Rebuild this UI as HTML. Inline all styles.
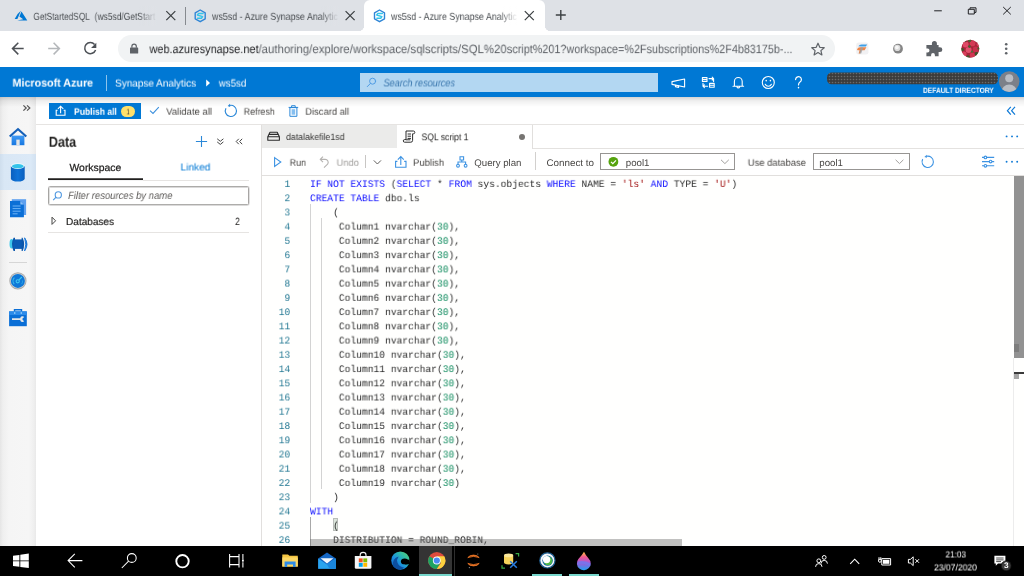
<!DOCTYPE html>
<html>
<head>
<meta charset="utf-8">
<title>ws5sd - Azure Synapse Analytics</title>
<style>
*{box-sizing:border-box;margin:0;padding:0}
html,body{width:1024px;height:576px;overflow:hidden;background:#fff}
body{font-family:"Liberation Sans",sans-serif;position:relative;color:#323130;text-rendering:geometricPrecision}
.a{position:absolute}
.t{position:absolute;white-space:nowrap;line-height:1;transform-origin:0 50%;will-change:transform}
svg{position:absolute;overflow:visible}
.dd{position:absolute;border:1px solid #979593;background:#fff}
#code{left:262px;top:176px;width:752px;height:370px;overflow:hidden;font-family:"Liberation Mono",monospace;font-size:10px;color:#2a2a2a}
.ln{position:absolute;left:0;width:28.2px;text-align:right;color:#237893;line-height:14.24px;height:14.24px;white-space:pre;transform-origin:100% 50%;will-change:transform}
.cl{position:absolute;left:48px;line-height:14.24px;height:14.24px;white-space:pre;transform-origin:0 50%;will-change:transform}
.k{color:#0c0cff}.n{color:#09885a}.s{color:#a31515}
.bm{background:#dfe6df;outline:1px solid #b9b9b9}
</style>
</head>

<body>
<!-- ===== Chrome tab bar ===== -->
<div class="a" style="left:0;top:0;width:1024px;height:30.5px;background:#dee1e6"></div>
<div class="a" style="left:363.8px;top:0;width:180.8px;height:31px;background:#fff;border-radius:6px 6px 0 0"></div>
<div class="a" style="left:358.8px;top:25.5px;width:5px;height:5px;background:radial-gradient(circle at 0 0,#dee1e6 4.8px,#fff 5.2px)"></div>
<div class="a" style="left:544.6px;top:25.5px;width:5px;height:5px;background:radial-gradient(circle at 100% 0,#dee1e6 4.8px,#fff 5.2px)"></div>
<div class="a" style="left:185px;top:7px;width:1px;height:17.5px;background:#868a8f"></div>
<!-- ===== nav bar ===== -->
<div class="a" style="left:0;top:30.5px;width:1024px;height:37.5px;background:#fff"></div>
<div class="a" style="left:118px;top:35px;width:717px;height:26.5px;border-radius:13.25px;background:#f1f3f4"></div>
<!-- ===== Azure bar ===== -->
<div class="a" style="left:0;top:67.3px;width:1024px;height:29.6px;background:#0078d4;will-change:transform"></div>
<div class="a" style="left:106px;top:74.5px;width:1px;height:16px;background:#8cc3ec"></div>
<div class="a" style="left:360px;top:73px;width:298px;height:19px;background:#b3d7f2"></div>
<!-- ===== app ===== -->
<div class="a" style="left:0;top:97px;width:35.8px;height:449px;background:linear-gradient(90deg,#e5e5e5 0,#efefef 8%,#f5f5f5 25%,#f6f6f6 80%,#efefef 94%,#e9e9e9 100%)"></div>
<div class="a" style="left:0;top:154.3px;width:35.8px;height:35.8px;background:linear-gradient(90deg,#cfdeed 0,#d9e7f5 12%,#dbe9f7 85%,#d2e1f0 100%);will-change:transform"></div>
<div class="a" style="left:9px;top:262px;width:18px;height:1px;background:#d6d6d6"></div>
<div class="a" style="left:36px;top:97px;width:988px;height:27.5px;background:#fff;border-bottom:1px solid #e6e4e2"></div>
<div class="a" style="left:0;top:96.9px;width:1024px;height:10px;background:linear-gradient(rgba(0,0,0,.17),rgba(0,0,0,.06) 40%,rgba(0,0,0,0))"></div>
<div class="a" style="left:48.75px;top:103px;width:92px;height:16px;background:#0078d4"></div>
<div class="a" style="left:121px;top:106px;width:14px;height:10.9px;border-radius:5.45px;background:#ffe16b"></div>
<!-- data panel -->
<div class="a" style="left:48px;top:178px;width:94.5px;height:2px;background:#201f1e;will-change:transform;transform:translateY(.15px) scaleY(.9)"></div>
<div class="a" style="left:142.5px;top:179.5px;width:106.5px;height:1px;background:#e6e4e2"></div>
<div class="a" style="left:48px;top:186px;width:201px;height:19px;border:1px solid #8a8886;border-radius:1.5px;background:#fff;will-change:transform;transform:translate(.25px,.3px)"></div>
<div class="a" style="left:48px;top:232px;width:201px;height:1px;background:#e6e4e2"></div>
<!-- editor -->
<div class="a" style="left:261px;top:124.5px;width:763px;height:421.5px;background:#fffffe;border-left:1px solid #e1dfdd"></div>
<div class="a" style="left:262px;top:124.5px;width:762px;height:24px;background:#fff"></div>
<div class="a" style="left:532px;top:147.6px;width:492px;height:1px;background:#e4e2e0"></div>
<div class="a" style="left:262px;top:124.5px;width:135.25px;height:23.3px;background:#ebebea"></div>
<div class="a" style="left:397.25px;top:124.5px;width:135.5px;height:24px;background:#fff;border-right:1px solid #e1dfdd"></div>
<div class="a" style="left:518.5px;top:133.75px;width:6px;height:6px;border-radius:3px;background:#767472"></div>
<div class="a" style="left:262px;top:148.5px;width:762px;height:27px;background:#fff;border-bottom:1px solid #e1dfdd"></div>
<div class="a" style="left:365px;top:155px;width:1px;height:13px;background:#c8c6c4"></div>
<div class="a" style="left:534.5px;top:152px;width:1px;height:18px;background:#d2d0ce"></div>
<div class="dd" style="left:600.25px;top:153.25px;width:135px;height:16.5px"></div>
<div class="dd" style="left:812.5px;top:153.25px;width:97.5px;height:16.5px"></div>
<!-- scrollbars --><!-- track line -->
<div class="a" style="left:1013.3px;top:358px;width:1px;height:188px;background:#ececec"></div>
<div class="a" style="left:1014px;top:176px;width:10px;height:182px;background:#929292"></div>
<div class="a" style="left:1014px;top:344px;width:5px;height:8px;background:#7d7d7d"></div>
<div class="a" style="left:1014px;top:372px;width:10px;height:1.5px;background:#3a3a3a"></div>
<div class="a" style="left:1014px;top:373.5px;width:5px;height:5.5px;background:#a5a5a5"></div>

<div class="a" id="code">
<div class="a" style="left:70.8px;top:341.76px;width:5.6px;height:13.6px;background:#dbe5db;border:1px solid #b9bdb9"></div>
<div class="a" style="left:47.5px;top:28.08px;width:1px;height:299.04px;background:#d3d3d3"></div>
<div class="a" style="left:59.2px;top:42.32px;width:1px;height:270.56px;background:#d3d3d3"></div>
<div class="a" style="left:47.5px;top:341.36px;width:1.2px;height:42.72px;background:#a8a8a8"></div>
<div class="ln" style="top:2px;transform:translateY(0.9px) scaleX(.9617)">1</div><div class="cl" style="top:2px;transform:translateY(0.9px) scaleX(.9617)"><span class=k>IF</span> <span class=k>NOT</span> <span class=k>EXISTS</span> (<span class=k>SELECT</span> * <span class=k>FROM</span> sys.objects <span class=k>WHERE</span> NAME = <span class=s>'ls'</span> <span class=k>AND</span> TYPE = <span class=s>'U'</span>)</div>
<div class="ln" style="top:17px;transform:translateY(0.14px) scaleX(.9617)">2</div><div class="cl" style="top:17px;transform:translateY(0.14px) scaleX(.9617)"><span class=k>CREATE</span> <span class=k>TABLE</span> dbo.ls</div>
<div class="ln" style="top:31px;transform:translateY(0.38px) scaleX(.9617)">3</div><div class="cl" style="top:31px;transform:translateY(0.38px) scaleX(.9617)">    (</div>
<div class="ln" style="top:45px;transform:translateY(0.62px) scaleX(.9617)">4</div><div class="cl" style="top:45px;transform:translateY(0.62px) scaleX(.9617)">     Column1 nvarchar(<span class=n>30</span>),</div>
<div class="ln" style="top:59px;transform:translateY(0.86px) scaleX(.9617)">5</div><div class="cl" style="top:59px;transform:translateY(0.86px) scaleX(.9617)">     Column2 nvarchar(<span class=n>30</span>),</div>
<div class="ln" style="top:74px;transform:translateY(0.1px) scaleX(.9617)">6</div><div class="cl" style="top:74px;transform:translateY(0.1px) scaleX(.9617)">     Column3 nvarchar(<span class=n>30</span>),</div>
<div class="ln" style="top:88px;transform:translateY(0.34px) scaleX(.9617)">7</div><div class="cl" style="top:88px;transform:translateY(0.34px) scaleX(.9617)">     Column4 nvarchar(<span class=n>30</span>),</div>
<div class="ln" style="top:102px;transform:translateY(0.58px) scaleX(.9617)">8</div><div class="cl" style="top:102px;transform:translateY(0.58px) scaleX(.9617)">     Column5 nvarchar(<span class=n>30</span>),</div>
<div class="ln" style="top:116px;transform:translateY(0.82px) scaleX(.9617)">9</div><div class="cl" style="top:116px;transform:translateY(0.82px) scaleX(.9617)">     Column6 nvarchar(<span class=n>30</span>),</div>
<div class="ln" style="top:131px;transform:translateY(0.06px) scaleX(.9617)">10</div><div class="cl" style="top:131px;transform:translateY(0.06px) scaleX(.9617)">     Column7 nvarchar(<span class=n>30</span>),</div>
<div class="ln" style="top:145px;transform:translateY(0.3px) scaleX(.9617)">11</div><div class="cl" style="top:145px;transform:translateY(0.3px) scaleX(.9617)">     Column8 nvarchar(<span class=n>30</span>),</div>
<div class="ln" style="top:159px;transform:translateY(0.54px) scaleX(.9617)">12</div><div class="cl" style="top:159px;transform:translateY(0.54px) scaleX(.9617)">     Column9 nvarchar(<span class=n>30</span>),</div>
<div class="ln" style="top:173px;transform:translateY(0.78px) scaleX(.9617)">13</div><div class="cl" style="top:173px;transform:translateY(0.78px) scaleX(.9617)">     Column10 nvarchar(<span class=n>30</span>),</div>
<div class="ln" style="top:188px;transform:translateY(0.02px) scaleX(.9617)">14</div><div class="cl" style="top:188px;transform:translateY(0.02px) scaleX(.9617)">     Column11 nvarchar(<span class=n>30</span>),</div>
<div class="ln" style="top:202px;transform:translateY(0.26px) scaleX(.9617)">15</div><div class="cl" style="top:202px;transform:translateY(0.26px) scaleX(.9617)">     Column12 nvarchar(<span class=n>30</span>),</div>
<div class="ln" style="top:216px;transform:translateY(0.5px) scaleX(.9617)">16</div><div class="cl" style="top:216px;transform:translateY(0.5px) scaleX(.9617)">     Column13 nvarchar(<span class=n>30</span>),</div>
<div class="ln" style="top:230px;transform:translateY(0.74px) scaleX(.9617)">17</div><div class="cl" style="top:230px;transform:translateY(0.74px) scaleX(.9617)">     Column14 nvarchar(<span class=n>30</span>),</div>
<div class="ln" style="top:244px;transform:translateY(0.98px) scaleX(.9617)">18</div><div class="cl" style="top:244px;transform:translateY(0.98px) scaleX(.9617)">     Column15 nvarchar(<span class=n>30</span>),</div>
<div class="ln" style="top:259px;transform:translateY(0.22px) scaleX(.9617)">19</div><div class="cl" style="top:259px;transform:translateY(0.22px) scaleX(.9617)">     Column16 nvarchar(<span class=n>30</span>),</div>
<div class="ln" style="top:273px;transform:translateY(0.46px) scaleX(.9617)">20</div><div class="cl" style="top:273px;transform:translateY(0.46px) scaleX(.9617)">     Column17 nvarchar(<span class=n>30</span>),</div>
<div class="ln" style="top:287px;transform:translateY(0.7px) scaleX(.9617)">21</div><div class="cl" style="top:287px;transform:translateY(0.7px) scaleX(.9617)">     Column18 nvarchar(<span class=n>30</span>),</div>
<div class="ln" style="top:301px;transform:translateY(0.94px) scaleX(.9617)">22</div><div class="cl" style="top:301px;transform:translateY(0.94px) scaleX(.9617)">     Column19 nvarchar(<span class=n>30</span>)</div>
<div class="ln" style="top:316px;transform:translateY(0.18px) scaleX(.9617)">23</div><div class="cl" style="top:316px;transform:translateY(0.18px) scaleX(.9617)">    )</div>
<div class="ln" style="top:330px;transform:translateY(0.42px) scaleX(.9617)">24</div><div class="cl" style="top:330px;transform:translateY(0.42px) scaleX(.9617)"><span class=k>WITH</span></div>
<div class="ln" style="top:344px;transform:translateY(0.66px) scaleX(.9617)">25</div><div class="cl" style="top:344px;transform:translateY(0.66px) scaleX(.9617)">    (</div>
<div class="ln" style="top:358px;transform:translateY(0.9px) scaleX(.9617)">26</div><div class="cl" style="top:358px;transform:translateY(0.9px) scaleX(.9617)">    DISTRIBUTION = ROUND_ROBIN,</div>
</div>
<div class="a" style="left:310px;top:538.5px;width:371.5px;height:7.5px;background:rgba(100,100,100,.4)"></div>
<!-- taskbar -->
<div class="a" style="left:0;top:546px;width:1024px;height:30px;background:#000"></div>
<div class="a" style="left:418.8px;top:546px;width:33px;height:30px;background:#343434"></div>
<div class="a" style="left:454px;top:546px;width:1px;height:30px;background:#2e2e2e"></div>
<div class="a" style="left:418.8px;top:574.4px;width:33px;height:1.6px;background:#76d6cb"></div>
<div class="a" style="left:532.2px;top:574.4px;width:30px;height:1.6px;background:#76d6cb"></div>
<div class="a" style="left:568.8px;top:574.4px;width:30.2px;height:1.6px;background:#76d6cb"></div>
<svg width="1024" height="576" viewBox="0 0 1024 576" style="left:0;top:0" fill="none">
<!-- windows logo -->
<path d="M13 555.8 L19.4 554.9 V560.4 H13Z M20.3 554.8 L28.8 553.6 V560.4 H20.3Z M13 561.3 H19.4 V566.8 L13 565.9Z M20.3 561.3 H28.8 V568.1 L20.3 566.9Z" fill="#fff"/>
<g stroke="#fff" stroke-width="1.05">
<!-- back -->
<path d="M82.4 560.6 H68.2 M74.8 553.9 L68.1 560.6 L74.8 567.3"/>
<!-- search -->
<circle cx="131.8" cy="558" r="4.4"/><path d="M128.6 561.2 L121.8 568"/>
<!-- cortana -->
<circle cx="182.5" cy="561.2" r="6.2" stroke-width="1.9"/>
<!-- task view -->
<path d="M229.6 556.6 H239 V564.6 H229.6Z M229.6 553.9 V556 M239 553.9 V556 M229.6 565.2 V567.4 M239 565.2 V567.4 M242.9 553.9 V559 M242.9 562.2 V567.4" />
<rect x="242" y="559.4" width="1.8" height="2.2" fill="#fff" stroke="none"/>
</g>
<!-- file explorer -->
<path d="M282.3 554.4 H288 L289.4 555.8 H297.8 V566.6 H282.3Z" fill="#f4c542"/>
<path d="M282.3 557.4 H297.8 V566.6 H282.3Z" fill="#fbd766"/>
<path d="M284.6 561.6 H295.6 V567 H293 V564.4 H287.2 V567 H284.6Z" fill="#2e8be6"/>
<!-- mail -->
<path d="M318.2 558.4 L327 552.4 L335.8 558.4 V568.7 H318.2Z" fill="#1667c4"/>
<path d="M320.6 558.2 H333.4 L327 563.4Z" fill="#f4f8fc"/>
<path d="M318.2 558.6 L327 564.4 L335.8 558.6 V568.7 H318.2Z" fill="#2aa4ee"/>
<path d="M335.8 558.6 V568.7 H329.6 L327 564.4Z" fill="#1b86dc"/>
<!-- store -->
<path d="M354.8 556 H371.4 V567.4 a1.3 1.3 0 0 1 -1.3 1.3 H356.1 a1.3 1.3 0 0 1 -1.3 -1.3Z" fill="#f5f5f5"/>
<path d="M360.2 556.2 V555 a2.9 2.6 0 0 1 5.8 0 V556.2" stroke="#f5f5f5" stroke-width="1.1"/>
<rect x="358.8" y="558.4" width="3.9" height="3.9" fill="#f25022"/><rect x="363.3" y="558.4" width="3.9" height="3.9" fill="#7fba00"/>
<rect x="358.8" y="562.9" width="3.9" height="3.9" fill="#00a4ef"/><rect x="363.3" y="562.9" width="3.9" height="3.9" fill="#ffb900"/>
<!-- edge -->
<defs><linearGradient id="eg" x1="1" y1="0" x2="0" y2="1"><stop offset="0" stop-color="#5bd46a"/><stop offset=".35" stop-color="#2bb7b0"/><stop offset=".6" stop-color="#1b8fe0"/><stop offset="1" stop-color="#0f5cb8"/></linearGradient></defs>
<circle cx="400.4" cy="560.6" r="9.2" fill="url(#eg)"/>
<path d="M393 565.8 Q392 558.4 398.6 556.4 Q396.4 559.4 397.4 562.6 Q398.8 567 404.4 567.8 Q401.6 570 398 569.4 Q394.6 568.4 393 565.8Z" fill="#0c4f9f"/>
<ellipse cx="404.6" cy="561.4" rx="3.7" ry="2.9" fill="#000"/>
<path d="M404.6 559.4 Q407.6 560.4 409.6 559.2 L410 563.4 Q407.4 565.2 404.6 564.2Z" fill="#000"/>
<!-- chrome -->
<circle cx="436.8" cy="560.5" r="8.6" fill="#dd4b3e"/>
<path d="M436.8 560.5 L429.4 564.8 A8.6 8.6 0 0 1 429.3 556.3Z" fill="#dd4b3e"/>
<path d="M436.8 560.5 L429.35 556.2 A8.6 8.6 0 0 0 436.8 569.1 L441 561.8Z" fill="#1ea362"/>
<path d="M436.8 569.1 A8.6 8.6 0 0 0 444.25 556.2 H436.8 L441 563Z" fill="#fdd23f"/>
<circle cx="436.8" cy="560.5" r="3.9" fill="#fff"/><circle cx="436.8" cy="560.5" r="3.1" fill="#4a8af4"/>
<!-- jupyter-ish -->
<path d="M467.8 557.6 A6.4 4.6 0 0 1 479.2 557.6 A8 3.4 0 0 0 467.8 557.6Z" fill="#f37726" stroke="#f37726" stroke-width=".8"/>
<path d="M467.8 563.4 A6.4 4.6 0 0 0 479.2 563.4 A8 3.4 0 0 1 467.8 563.4Z" fill="#f37726" stroke="#f37726" stroke-width=".8"/>
<circle cx="469.4" cy="567.6" r=".7" fill="#8a8a8a"/><circle cx="477.8" cy="554" r=".6" fill="#8a8a8a"/>
<!-- db tool -->
<path d="M504 555.4 V562.6 A4.6 1.8 0 0 0 513.2 562.6 V555.4Z" fill="#f7d35a"/>
<ellipse cx="508.6" cy="555.4" rx="4.6" ry="1.8" fill="#fbe89b"/>
<path d="M515.6 553.6 H518.6 V556.6 M505 568.2 H502 V565.2" stroke="#3aa845" stroke-width="1.2"/>
<path d="M510.2 561.2 L516.8 567.8 M516.8 561.2 L510.2 567.8" stroke="#2a7de1" stroke-width="1.5"/>
<!-- webex -->
<circle cx="547.4" cy="560.4" r="7.6" fill="#f4f6f8" stroke="#1d5b8e" stroke-width="1.2"/>
<circle cx="547.6" cy="560.6" r="5.2" fill="#0e5fa8"/>
<circle cx="548" cy="560.8" r="4.4" fill="#4fb848"/>
<circle cx="546.6" cy="559.6" r="3.7" fill="#fff"/>
<!-- paint3d drop -->
<defs><linearGradient id="pd" x1="0" y1="0" x2="0" y2="1"><stop offset="0" stop-color="#ffc83d"/><stop offset=".28" stop-color="#f2588f"/><stop offset=".6" stop-color="#a259d9"/><stop offset="1" stop-color="#1fa2f2"/></linearGradient></defs>
<path d="M584 551.8 Q585.6 555.4 588.6 558.4 A6.9 6.9 0 1 1 578.4 559 Q582 555.4 584 551.8Z" fill="url(#pd)"/>
<path d="M578 561.6 Q584 560 590.6 563.6 A6.9 6.9 0 0 1 590.2 566.2 Q584 562.6 577.4 564.2 A6.9 6.9 0 0 1 578 561.6Z" fill="#6f7bf0" opacity=".75"/>
<!-- tray -->
<g stroke="#fff" stroke-width="1">
<circle cx="824.2" cy="557.4" r="1.9"/><path d="M821 563.6 a3.2 3.2 0 0 1 6.4 0"/>
<circle cx="818.8" cy="560.8" r="1.9"/><path d="M815.6 566.8 a3.2 3.2 0 0 1 6.4 0"/>
<path d="M850.2 563.8 L854.7 559.2 L859.2 563.8" stroke-width="1.1"/>
<path d="M881.8 558.6 H890.6 V565 H881.8Z"/><path d="M879 557.2 V559 M880.8 557.2 V559 M878.6 559.4 H881.2 V561 a1.3 1.3 0 0 1 -2.6 0Z"/>
<path d="M908.4 559.4 H910.4 L913.2 556.8 V565.6 L910.4 563 H908.4Z"/><path d="M915.4 559.2 L919 562.8 M919 559.2 L915.4 562.8"/>
</g>
<rect x="883" y="559.8" width="6.4" height="4" fill="#fff"/>
<!-- notifications -->
<path d="M994.4 555.8 H1005.4 V563.6 H998 L995.8 565.8 V563.6 H994.4Z" fill="#fff"/>
<path d="M996.2 558 H1003.6 M996.2 559.9 H1003.6 M996.2 561.6 H1001" stroke="#000" stroke-width=".7"/>
<circle cx="1006.2" cy="565.8" r="4.9" fill="#3b3b3b" stroke="#111" stroke-width=".8"/>
</svg>
<div class="t" style="left:1003.9px;top:561.8px;font-size:8.2px;color:#fff;font-weight:bold">3</div>

<!-- text -->
<div class="t" style="left:33px;top:12px;font-size:10.3px;color:#4a4e52;transform:translate(0.5px,0.9px) scaleX(0.7989);">GetStartedSQL</div>
<div class="t" style="left:94px;top:12px;font-size:10.3px;color:#4a4e52;transform:translate(0.6px,0.9px) scaleX(0.8208);">(ws5sd/GetStart</div>
<div class="t" style="left:212px;top:12px;font-size:10.3px;color:#4a4e52;transform:translate(0px,0.9px) scaleX(0.8633);">ws5sd - Azure Synapse Analytic</div>
<div class="t" style="left:391px;top:12px;font-size:10.3px;color:#4a4e52;transform:translate(0px,0.9px) scaleX(0.8633);">ws5sd - Azure Synapse Analytic</div>
<div class="t" style="left:149px;top:43px;font-size:12.1px;color:#202124;transform:translate(0.5px,0.1px) scaleX(0.9007);">web.azuresynapse.net</div>
<div class="t" style="left:258px;top:43px;font-size:12.1px;color:#5f6368;transform:translate(0.5px,0.1px) scaleX(0.9419);">/authoring/explore/workspace/sqlscripts/SQL%20s</div>
<div class="t" style="left:512px;top:43px;font-size:12.1px;color:#5f6368;transform:translate(0.4px,0.1px) scaleX(0.8931);">cript%201?workspace=%2Fsubscriptions%2F4b83175b-...</div>
<div class="t" style="left:12px;top:78px;font-size:11.4px;color:#fff;transform:translate(0.5px,0.6px) scaleX(0.9398);font-weight:bold;">Microsoft Azure</div>
<div class="t" style="left:115px;top:79px;font-size:10.4px;color:#fff;transform:translate(0px,0.6px) scaleX(0.9605);">Synapse Analytics</div>
<div class="t" style="left:218px;top:79px;font-size:10.4px;color:#fff;transform:translate(0.75px,0.6px) scaleX(0.9337);">ws5sd</div>
<div class="t" style="left:383px;top:78px;font-size:10.6px;color:#3b77ad;transform:translate(0.5px,0.4px) scaleX(0.8611);font-style:italic;">Search resources</div>
<div class="t" style="left:923px;top:86px;font-size:7.7px;color:#fff;transform:translate(0px,0.9px) scaleX(0.8643);font-weight:bold;">DEFAULT DIRECTORY</div>
<div class="t" style="left:74px;top:107px;font-size:9.6px;color:#fff;transform:translate(0px,0.8px) scaleX(0.8940);font-weight:bold;">Publish all</div>
<div class="t" style="left:126px;top:108px;font-size:7.9px;color:#323130;transform:translate(0.6px,0.4px) scaleX(0.6833);">1</div>
<div class="t" style="left:166px;top:107px;font-size:9.6px;color:#484644;transform:translate(0.25px,0.75px) scaleX(0.9895);">Validate all</div>
<div class="t" style="left:243px;top:107px;font-size:9.6px;color:#484644;transform:translate(0.75px,0.75px) scaleX(0.9228);">Refresh</div>
<div class="t" style="left:305px;top:107px;font-size:9.6px;color:#484644;transform:translate(0.25px,0.75px) scaleX(0.9766);">Discard all</div>
<div class="t" style="left:48px;top:135px;font-size:14.5px;color:#201f1e;transform:translate(0.75px,0.75px) scaleX(0.8748);font-weight:bold;">Data</div>
<div class="t" style="left:69px;top:163px;font-size:10.2px;color:#201f1e;transform:translate(0.5px,0.5px) scaleX(1.0191);-webkit-text-stroke:.25px #201f1e;">Workspace</div>
<div class="t" style="left:180px;top:163px;font-size:10.2px;color:#0078d4;transform:translate(0.5px,0.5px) scaleX(0.9990);">Linked</div>
<div class="t" style="left:68px;top:191px;font-size:10.6px;color:#605e5c;transform:translate(0px,0px) scaleX(0.8964);font-style:italic;">Filter resources by name</div>
<div class="t" style="left:66px;top:218px;font-size:10.1px;color:#201f1e;transform:translate(0px,0px) scaleX(0.9945);-webkit-text-stroke:.2px #201f1e;">Databases</div>
<div class="t" style="left:235px;top:217px;font-size:10.6px;color:#201f1e;transform:translate(0px,0px) scaleX(0.8466);">2</div>
<div class="t" style="left:286px;top:132px;font-size:9.2px;color:#323130;transform:translate(0px,0.9px) scaleX(0.9544);">datalakefile1sd</div>
<div class="t" style="left:421px;top:133px;font-size:9.7px;color:#201f1e;transform:translate(0.5px,0.2px) scaleX(0.8857);">SQL script 1</div>
<div class="t" style="left:289px;top:158px;font-size:9.6px;color:#484644;transform:translate(0.75px,0.8px) scaleX(0.9228);">Run</div>
<div class="t" style="left:336px;top:158px;font-size:9.6px;color:#a19f9d;transform:translate(0.5px,0.8px) scaleX(0.9809);">Undo</div>
<div class="t" style="left:413px;top:158px;font-size:9.6px;color:#484644;transform:translate(0px,0.8px) scaleX(0.9851);">Publish</div>
<div class="t" style="left:474px;top:158px;font-size:9.6px;color:#484644;transform:translate(0.25px,0.8px) scaleX(1.0067);">Query plan</div>
<div class="t" style="left:546px;top:158px;font-size:9.6px;color:#484644;transform:translate(0.5px,0.8px) scaleX(1.0236);">Connect to</div>
<div class="t" style="left:625px;top:158px;font-size:9.6px;color:#484644;transform:translate(0.75px,0.8px) scaleX(1.0113);">pool1</div>
<div class="t" style="left:747px;top:158px;font-size:9.6px;color:#484644;transform:translate(0.75px,0.8px) scaleX(0.9839);">Use database</div>
<div class="t" style="left:819px;top:158px;font-size:9.6px;color:#484644;transform:translate(0.25px,0.8px) scaleX(1.0113);">pool1</div>
<div class="t" style="left:945px;top:550px;font-size:9.0px;color:#fff;transform:translate(0.5px,0.5px) scaleX(0.9098);">21:03</div>
<div class="t" style="left:934px;top:563px;font-size:9.0px;color:#fff;transform:translate(0px,0.5px) scaleX(0.9546);">23/07/2020</div>
<!-- tab fades -->
<div class="a" style="left:139px;top:6px;width:18px;height:20px;background:linear-gradient(90deg,rgba(222,225,230,0),#dee1e6)"></div>
<div class="a" style="left:321px;top:6px;width:18px;height:20px;background:linear-gradient(90deg,rgba(222,225,230,0),#dee1e6)"></div>
<div class="a" style="left:500px;top:6px;width:18px;height:20px;background:linear-gradient(90deg,rgba(255,255,255,0),#fff)"></div>
<!-- icons: one page-sized svg, absolute coords -->
<svg width="1024" height="576" viewBox="0 0 1024 576" style="left:0;top:0" fill="none">
<!-- chrome: tab favicons -->
<g id="fav-azure">
<path d="M20.9 10.8 L17.6 13.9 L14.7 19 L17.4 19 L20.9 10.8Z" fill="#0078d4"/>
<path d="M21.5 11.6 L19.4 16.6 L23.2 19.2 L17.3 20.4 L27.3 20.4Z" fill="#0078d4"/>
</g>
<g id="fav-syn" stroke-linejoin="round">
<path d="M200.2 10 L205.2 12.9 L205.2 18.8 L200.2 21.7 L195.2 18.8 L195.2 12.9Z" stroke="#2f86d6" stroke-width="1.4"/>
<path d="M203 13.6 H198.6 L197.4 15 L202.6 16.6 L201.4 18.2 H197.6" stroke="#35c4ea" stroke-width="1.5" stroke-linecap="round"/>
</g>
<g transform="translate(179.3 0)" stroke-linejoin="round"><path d="M200.2 10 L205.2 12.9 L205.2 18.8 L200.2 21.7 L195.2 18.8 L195.2 12.9Z" stroke="#2f86d6" stroke-width="1.4"/><path d="M203 13.6 H198.6 L197.4 15 L202.6 16.6 L201.4 18.2 H197.6" stroke="#35c4ea" stroke-width="1.5" stroke-linecap="round"/></g>
<!-- tab close / new tab -->
<g stroke="#3c4043" stroke-width="1.25" stroke-linecap="butt">
<path d="M166.3 11.1 L175.3 20.1 M175.3 11.1 L166.3 20.1"/>
<path d="M166.3 11.1 L175.3 20.1 M175.3 11.1 L166.3 20.1" transform="translate(179.3 0)"/><path d="M166.3 11.1 L175.3 20.1 M175.3 11.1 L166.3 20.1" transform="translate(358.5 0)"/>
<path d="M555.8 15 H565.8 M560.8 10 V20" stroke-width="1.4"/>
</g>
<!-- window controls -->
<g stroke="#202124" stroke-width="1">
<path d="M934.2 10.8 H941.8"/>
<path d="M968.3 9.3 H974.3 V14 H968.3Z M970 9.3 V7.8 H976 V12.4 H974.3"/>
<path d="M1003.2 7 L1010.8 14.4 M1010.8 7 L1003.2 14.4"/>
</g>
<!-- nav buttons -->
<g stroke="#4d5156" stroke-width="1.5" stroke-linejoin="miter">
<path d="M23.7 48.6 H13 M18.3 42.8 L12.5 48.6 L18.3 54.4"/>
<path d="M48.2 48.6 H59 M53.6 42.8 L59.4 48.6 L53.6 54.4" stroke="#b4b7ba"/>
<path d="M94.6 44.4 A5.6 5.6 0 1 0 95.6 50"/>
</g>
<path d="M96.3 42.8 V48 H91.1Z" fill="#4d5156"/>
<!-- lock -->
<path d="M130.6 47.6 h7 a.6 .6 0 0 1 .6 .6 v4.8 a.6 .6 0 0 1 -.6 .6 h-7 a.6 .6 0 0 1 -.6 -.6 v-4.8 a.6 .6 0 0 1 .6 -.6Z" fill="#5f6368"/>
<path d="M131.9 47.8 V46.3 a2.2 2.2 0 0 1 4.4 0 V47.8" stroke="#5f6368" stroke-width="1.2"/>
<!-- star -->
<path d="M818 43.2 L819.8 47.3 L824.2 47.7 L820.9 50.6 L821.9 54.9 L818 52.6 L814.1 54.9 L815.1 50.6 L811.8 47.7 L816.2 47.3Z" stroke="#5f6368" stroke-width="1.2" stroke-linejoin="round"/>
<!-- extension 1 -->
<rect x="856.2" y="42.6" width="12.2" height="12" rx="2.4" fill="#f1f1f3"/>
<path d="M858.4 46.2 Q859.4 44.4 861.4 44.4 H867.2 L865.8 46.6 H860.6Z" fill="#3f9fe6"/>
<path d="M857 49.2 Q858 47.3 860 47.3 H866.4 L864.6 50.2 H861.4 L860.2 53.4 L858.6 53.4 L859.6 50.2 H857.6Z" fill="#ef8648"/>
<path d="M860.8 47.3 H863.4 L861.2 53.4 H859.4Z" fill="#9aa0a6" opacity=".75"/>
<!-- extension 2 -->
<circle cx="898" cy="48.7" r="4.9" fill="#858585"/>
<circle cx="897.3" cy="47.9" r="3.1" fill="#dcdcdc"/>
<circle cx="896.9" cy="47.5" r="1.8" fill="#f6f6f6"/>
<!-- puzzle -->
<path d="M926.4 45 H931.9 V43.6 a2.5 2.5 0 1 1 5 0 V45 H938.6 V47.2 H939.9 a2.45 2.45 0 1 1 0 4.9 H938.6 V56.3 H934.9 V55 a1.9 1.9 0 1 0 -3.8 0 V56.3 H926.4 V52.4 H927.6 a1.9 1.9 0 1 0 0 -3.8 H926.4Z" fill="#5f6368"/>
<!-- chrome avatar -->
<clipPath id="av"><circle cx="970.3" cy="48.7" r="9"/></clipPath>
<g clip-path="url(#av)">
<rect x="960" y="38" width="21" height="22" fill="#a9243b"/>
<circle cx="965.6" cy="44.6" r="3" fill="#e04a66"/><circle cx="972.6" cy="43.4" r="2.8" fill="#d33a55"/>
<circle cx="968.6" cy="50" r="3" fill="#e2506c"/><circle cx="975.6" cy="49.4" r="2.8" fill="#c8304c"/>
<circle cx="964" cy="54" r="2.6" fill="#d9405c"/><circle cx="972.4" cy="55" r="2.6" fill="#cf3652"/>
<circle cx="978.4" cy="44.6" r="1.8" fill="#d84560"/>
<circle cx="962.2" cy="49.6" r="1.7" fill="#3e5a2c"/><circle cx="969.4" cy="46.6" r="1.3" fill="#46622f"/>
<circle cx="976.6" cy="54" r="2" fill="#3a5428"/><circle cx="968" cy="57" r="1.8" fill="#405c2c"/>
<circle cx="969.6" cy="40.6" r="1.6" fill="#4a6632"/><circle cx="978.6" cy="48.4" r="1.2" fill="#46622f"/>
<circle cx="972" cy="51.6" r="1.1" fill="#51703a"/><circle cx="965.4" cy="41" r="1.3" fill="#5a3a2a"/>
</g>
<!-- menu dots -->
<g fill="#5f6368"><circle cx="1006.2" cy="44.2" r="1.3"/><circle cx="1006.2" cy="48.7" r="1.3"/><circle cx="1006.2" cy="53.2" r="1.3"/></g>

<!-- ===== azure header icons ===== -->
<path d="M206.2 79.6 L210 83.1 L206.2 86.6Z" fill="#fff"/>
<g stroke="#fff" stroke-width="1.1" stroke-linejoin="round" stroke-linecap="round">
<!-- search -->
<g stroke="#4f9be2" stroke-width="1"><circle cx="372.6" cy="81.2" r="3"/><path d="M370.5 83.4 L367.3 86.6"/></g>
<!-- megaphone -->
<path d="M684.6 79 V87 L672 84.4 V81.6Z"/><path d="M675.4 85.2 V86.6 L678.6 87.4 V85.9"/>
<!-- portal switch -->
<path d="M702.4 77.6 h4.6 v3.8 h-4.6Z M702.4 79.5 h4.6"/>
<path d="M709.6 83.4 h4.6 v3.8 h-4.6Z M709.6 85.3 h4.6"/>
<path d="M709 78.6 h4.6 v3 M712.2 77.2 L713.6 78.6 L712.2 80"/>
<path d="M707.6 86.2 h-4.6 v-3 M704.4 87.6 L703 86.2 L704.4 84.8"/>
<!-- bell -->
<path d="M733 86.2 H743.6 M734.4 86.2 V81.4 a3.9 3.9 0 0 1 7.8 0 V86.2 M737 87 a1.4 1.4 0 0 0 2.6 0"/>
<!-- smiley -->
<circle cx="768.3" cy="82.5" r="6"/>
<path d="M765.2 84.2 a3.4 3.4 0 0 0 6.2 0"/>
<path d="M766.2 80.6 v.2 M770.4 80.6 v.2" stroke-width="1.5"/>
<!-- question -->
<path d="M795.6 79.6 a2.9 2.9 0 1 1 4.4 2.5 q-1.5 1 -1.5 2.9" stroke-width="1.2"/>
<path d="M798.5 87.4 v.3" stroke-width="1.5"/>
</g>
<!-- redacted scribble -->
<pattern id="scr" width="3" height="3" patternUnits="userSpaceOnUse"><rect width="3" height="3" fill="#3c3c3c"/><circle cx="1.5" cy="1.5" r=".8" fill="#6a6a6a"/></pattern>
<rect x="827" y="72.6" width="171" height="11.6" rx="4.5" fill="url(#scr)"/>
<!-- avatar -->
<clipPath id="av2"><circle cx="1009.2" cy="81.6" r="10.3"/></clipPath>
<circle cx="1009.2" cy="81.6" r="10.3" fill="#7c8089"/>
<g clip-path="url(#av2)" fill="#b9bdc4"><circle cx="1009.2" cy="78.2" r="4"/><path d="M1001.4 92 a7.8 7.4 0 0 1 15.6 0Z"/></g>

<!-- ===== command bar icons ===== -->
<g stroke="#555" stroke-width="1.25" stroke-linejoin="miter">
<path d="M23.4 105.4 L26.2 108 L23.4 110.6 M27 105.4 L29.8 108 L27 110.6"/>
</g>
<g stroke="#fff" stroke-width="1.1">
<path d="M57.6 110.2 H56.2 V115.2 H65 V110.2 H63.6"/><path d="M60.6 113.2 V106.4 M57.9 108.9 L60.6 106.2 L63.3 108.9"/>
</g>
<g stroke="#2b88d8" stroke-width="1.15">
<path d="M150 110.6 L153 113.4 L158.8 107.2" stroke="#3b8fdd" stroke-width="1.05"/>
<path d="M229.74 105.42 A5.60 5.60 0 1 1 225.96 108.27"/><path d="M227.66 106.09 L229.91 103.87 L230.22 107.06Z" fill="#2b88d8" stroke="none"/>
<path d="M289.9 107.6 H296.9 V116.3 H289.9Z" fill="#fff" stroke-width="1"/><rect x="291.6" y="109.2" width="3.6" height="5.5" fill="#86bff0" stroke="none"/><path d="M288.6 107.4 H298.2 M291.6 107.2 V105.7 H295.2 V107.2" stroke-width="1"/>
</g>
<g stroke="#0f7ad6" stroke-width="1.2"><path d="M1010.8 106.8 L1007.4 110.7 L1010.8 114.6 M1015 106.8 L1011.6 110.7 L1015 114.6"/></g>
<!-- ===== data panel icons ===== -->
<path d="M195.9 141.5 H207.1 M201.5 135.9 V147.1" stroke="#2b88d8" stroke-width="1.1"/>
<g stroke="#444" stroke-width="1">
<path d="M217.2 138.8 L220.3 141.3 L223.4 138.8 M217.2 141.9 L220.3 144.4 L223.4 141.9"/>
<path d="M238.8 138.8 L236.2 141.5 L238.8 144.2 M242.2 138.8 L239.6 141.5 L242.2 144.2"/>
<path d="M52 217.2 L55.6 220.8 L52 224.4Z" stroke="#323130" stroke-width=".9"/>
</g>
<g stroke="#4e97e0" stroke-width="1.1"><circle cx="58.3" cy="194.9" r="3.1"/><path d="M56.1 197.2 L53.2 200.2"/></g>
<!-- ===== editor tab icons ===== -->
<g stroke="#2b2b2b" stroke-width="1.1" stroke-linejoin="round">
<path d="M267.8 136.8 L270 132.2 H277.2 L279.4 136.8 V140.2 H267.8Z M267.8 136.8 H279.4 M269.6 134.4 H277.6"/>
<path d="M406 131 H413.4 a1.4 1.4 0 0 1 0 2.8 H412.6 V140.4 a1.8 1.8 0 0 1 -1.8 1.8 H404.6 a1.3 1.3 0 0 1 0 -2.6 H406Z M407.6 134 H411 M407.6 136.2 H411 M407.6 138.4 H411 M406 139.8 H410.4" stroke-width="1"/>
</g>
<g fill="#0f7ad6"><circle cx="1006.6" cy="136.4" r=".95"/><circle cx="1012" cy="136.4" r=".95"/><circle cx="1017.2" cy="136.4" r=".95"/>
<circle cx="1006.6" cy="161.8" r=".95"/><circle cx="1012" cy="161.8" r=".95"/><circle cx="1017.2" cy="161.8" r=".95"/></g>
<!-- ===== editor toolbar icons ===== -->
<g stroke="#3d93e3" stroke-width="1.1" stroke-linejoin="miter">
<path d="M274.6 157.6 L280.8 162 L274.6 166.4Z"/>
<path d="M397.4 161.4 H395.6 V167.2 H406 V161.4 H404.2"/><path d="M400.8 165 V156.6 M397.8 159.6 L400.8 156.6 L403.8 159.6"/>
<path d="M460 156.8 H463.6 V160 H460Z M461.8 160 V162 M458 164.4 V162 H465.6 V164.4"/><circle cx="458" cy="165.7" r="1.4"/><circle cx="465.6" cy="165.7" r="1.4"/>
<path d="M926.51 156.22 A5.70 5.70 0 1 1 922.67 159.12"/><path d="M924.40 156.91 L926.70 154.67 L927.01 157.86Z" fill="#3d93e3" stroke="none"/>
<path d="M982 157.4 H994.2 M982 161.6 H994.2 M982 165.8 H994.2"/>
<g fill="#fff"><circle cx="985.4" cy="157.4" r="1.3"/><circle cx="990.6" cy="161.6" r="1.3"/><circle cx="985.4" cy="165.8" r="1.3"/></g>
</g>
<g stroke="#b5b3b1" stroke-width="1.1"><path d="M320.6 159.4 H325.2 a3 3 0 0 1 2.4 4.8 L324 167.6 M323 156.6 L320.2 159.4 L323 162.2" stroke-linejoin="round"/></g>
<g stroke="#605e5c" stroke-width="1"><path d="M373.8 160.4 L377.4 164 L381 160.4"/></g>
<g stroke="#a19f9d" stroke-width="1"><path d="M721 159.8 L724.9 163.6 L728.8 159.8 M895.6 159.8 L899.5 163.6 L903.4 159.8"/></g>
<circle cx="613.4" cy="161.8" r="4.9" fill="#55a30e"/>
<path d="M611 161.9 L612.8 163.7 L616 160.3" stroke="#fff" stroke-width="1.2"/>

<!-- ===== sidebar icons ===== -->
<defs>
<linearGradient id="gb" x1="0" y1="0" x2="0" y2="1"><stop offset="0" stop-color="#3f9af5"/><stop offset="1" stop-color="#1777e0"/></linearGradient>
<linearGradient id="gc" x1="0" y1="0" x2="1" y2="0"><stop offset="0" stop-color="#0a5fbe"/><stop offset=".5" stop-color="#0f73d8"/><stop offset="1" stop-color="#0a5fbe"/></linearGradient>
</defs>
<!-- home -->
<path d="M11.6 135.6 H24.4 V145.2 H11.6Z" fill="url(#gb)"/>
<path d="M18 127.8 L27 135.8 L25.6 137.2 L18 130.4 L10.4 137.2 L9 135.8Z" fill="#1560b8"/>
<path d="M16.3 139.6 H19.7 V145.2 H16.3Z" fill="#e4e4e4"/>
<!-- data cylinder -->
<path d="M10.9 166 V178.6 A6.9 3 0 0 0 24.7 178.6 V166Z" fill="url(#gc)"/>
<ellipse cx="17.8" cy="166" rx="6.9" ry="2.9" fill="#e8f6fc"/>
<ellipse cx="17.8" cy="166.2" rx="5.9" ry="2.1" fill="#33c3ea"/>
<!-- develop doc -->
<path d="M11.8 199.2 H26.1 V215 H11.8Z" fill="#5ea0ef"/>
<path d="M10 201 H20.4 L23.9 204.5 V217.3 H10Z" fill="#0b6fd6"/>
<path d="M20.4 201 L23.9 204.5 H20.4Z" fill="#8ec0f5"/>
<path d="M12.6 206 H20.6 M12.6 208.6 H20.6 M12.6 211.2 H20.6 M12.6 213.8 H17.6" stroke="#6db3f6" stroke-width="1"/>
<!-- integrate pipe -->
<ellipse cx="11.6" cy="243.7" rx="2.1" ry="4.8" fill="#3ec8ec"/>
<path d="M13.6 237.8 Q10.4 244.3 13.6 250.9 L15 250.9 V237.8Z" fill="#0b56aa"/>
<rect x="13.4" y="239.4" width="9.6" height="9.5" fill="#0c5cb5"/>
<path d="M22.6 237.8 Q25.8 244.3 22.6 250.9 L21.6 250.9 V237.8Z" fill="#0b56aa"/>
<path d="M24.6 237.8 Q29.4 244.3 24.6 250.9 Q27 244.3 24.6 237.8Z" fill="#1273d6" stroke="#1273d6" stroke-width=".9"/>
<!-- monitor -->
<circle cx="17.9" cy="280.9" r="8.6" fill="#a9a9a9"/>
<circle cx="17.9" cy="280.9" r="7.7" fill="#cfcfcf"/>
<circle cx="17.9" cy="280.9" r="7" fill="#0f78d8"/>
<g stroke="#41c8f0" stroke-width="1.1" fill="none"><path d="M14.2 284.2 A4.9 4.9 0 0 1 14.4 277.6" opacity=".8"/><path d="M21.6 284.2 A4.9 4.9 0 0 0 22.6 280.4" opacity=".5"/><circle cx="17.7" cy="281.3" r="1.6"/><path d="M18.8 280.2 L21.8 277"/></g>
<!-- manage toolbox -->
<path d="M13.8 311.4 V309 H22.2 V311.4 H20.8 V310.4 H15.2 V311.4Z" fill="#0b6fd6"/>
<rect x="9.1" y="311.4" width="17.7" height="14.8" fill="#0b6fd6"/>
<rect x="9.1" y="311.4" width="17.7" height="3.6" fill="#2c8bea"/>
<path d="M12 318.2 H20.2 a2.3 2.3 0 0 1 4 -1.2 l-1.7 1.4 v1.4 l1.7 1.4 a2.3 2.3 0 0 1 -4 -1.2 H12Z" fill="#e6e6e6"/>
<rect x="14" y="312" width="1.4" height="2" fill="#7fc0f7"/><rect x="20.6" y="312" width="1.4" height="2" fill="#7fc0f7"/>
</svg>

</body>
</html>
